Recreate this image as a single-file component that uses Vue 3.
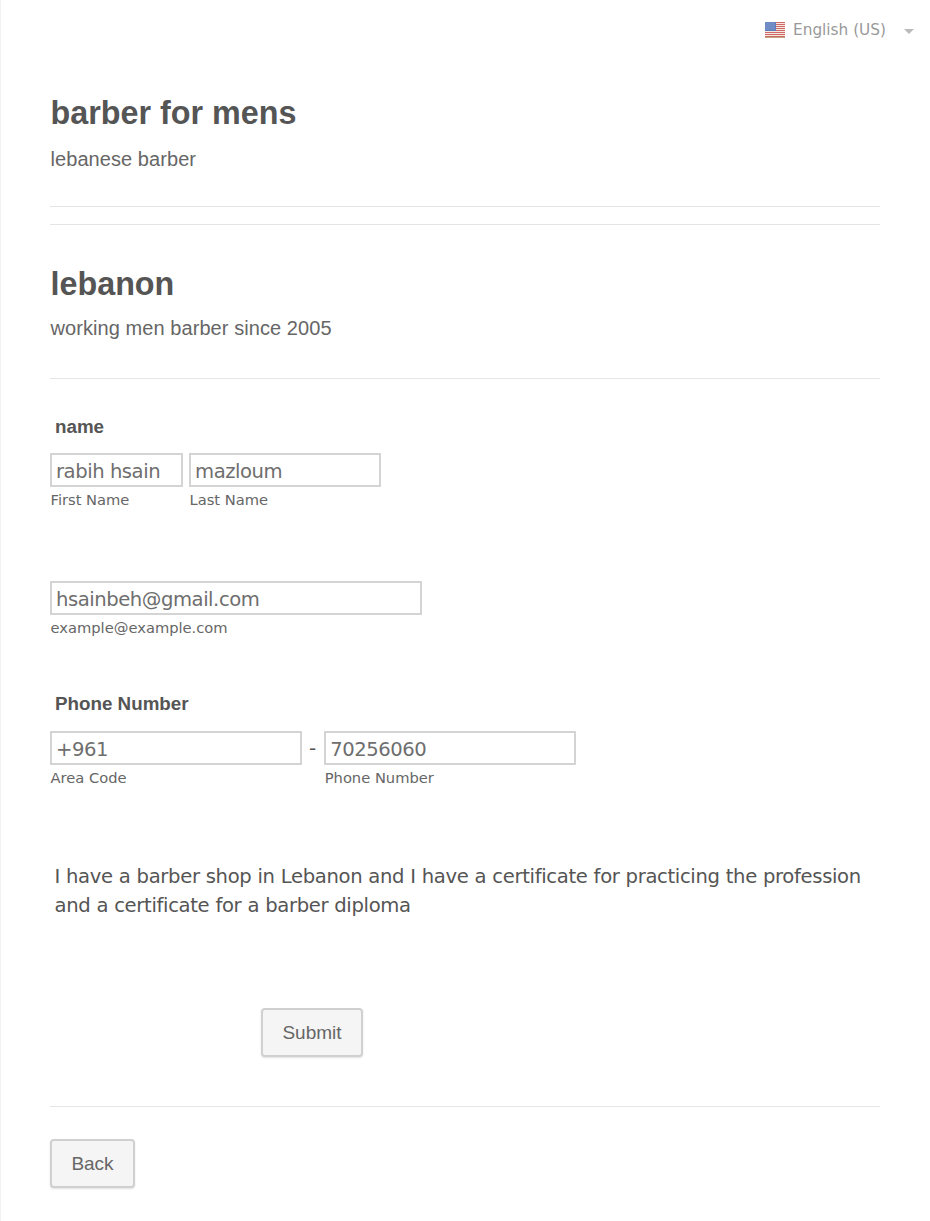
<script setup>
const stripes = [0, 1, 2, 3, 4, 5, 6, 7]
const stars = []
for (let r = 0; r < 4; r++) {
  for (let c = 0; c < 5; c++) {
    stars.push({ x: 0.5 + c * 2, y: 0.5 + r * 2 })
  }
}
</script>

<template>
  <div class="page">
    <div class="lang">
      <svg class="flag" width="20" height="16" viewBox="0 0 20 16">
        <rect width="20" height="16" fill="#f3e9dc" />
        <rect v-for="s in stripes" :key="s" x="0" :y="s * 2" width="20" height="1" fill="#d0686a" />
        <rect width="11" height="9" fill="#5f7dbd" />
        <rect v-for="(d, i) in stars" :key="i" :x="d.x" :y="d.y" width="1" height="1" fill="#a9b9dd" />
        <rect y="15" width="20" height="1" fill="#c4a67c" />
      </svg>
      <span class="lang-text">English (US)</span>
      <span class="caret"></span>
    </div>

    <main class="form">
      <header class="head first">
        <h1>barber for mens</h1>
        <p>lebanese barber</p>
      </header>
      <header class="head second">
        <h1>lebanon</h1>
        <p>working men barber since 2005</p>
      </header>

      <section class="field name">
        <div class="label">name</div>
        <div class="row">
          <label class="sub">
            <input class="inp w-first" value="rabih hsain" />
            <span>First Name</span>
          </label>
          <label class="sub">
            <input class="inp w-last" value="mazloum" />
            <span>Last Name</span>
          </label>
        </div>
      </section>

      <section class="field email">
        <label class="sub">
          <input class="inp w-email" value="hsainbeh@gmail.com" />
          <span>example@example.com</span>
        </label>
      </section>

      <section class="field phone">
        <div class="label label-phone">Phone Number</div>
        <div class="row">
          <label class="sub area">
            <input class="inp w-phone" value="+961" />
            <span>Area Code</span>
          </label>
          <span class="dash">-</span>
          <label class="sub">
            <input class="inp w-phone" value="70256060" />
            <span>Phone Number</span>
          </label>
        </div>
      </section>

      <p class="desc">I have a barber shop in Lebanon and I have a certificate for practicing the profession and a certificate for a barber diploma</p>

      <div class="submit-row">
        <button class="btn submit" type="button">Submit</button>
      </div>

      <div class="back-row">
        <button class="btn back" type="button">Back</button>
      </div>
    </main>
  </div>
</template>

<style>
html, body { margin: 0; background: #fff; }
</style>

<style scoped>
.page {
  box-sizing: border-box;
  width: 930px;
  height: 1221px;
  overflow: hidden;
  border-left: 1px solid #f2f2f2;
  font-family: "DejaVu Sans", sans-serif;
  color: #555;
}
.lang {
  display: flex;
  align-items: center;
  justify-content: flex-end;
  height: 20px;
  padding: 20px 15px 0 0;
}
.flag { margin-right: 8px; }
.lang-text { font-size: 15.3px; color: #999; }
.caret {
  width: 0;
  height: 0;
  margin: 2px 1px 0 18px;
  border-left: 5.5px solid transparent;
  border-right: 5.5px solid transparent;
  border-top: 5.5px solid #bbb;
}
.form { width: 830px; margin-left: 49px; }
.head { font-family: "Liberation Sans", Arial, sans-serif; border-bottom: 1px solid #e5e5e5; }
.head h1 { margin: 0; padding-left: 0.5px; font-size: 32.3px; line-height: 36px; font-weight: 700; color: #555; }
.head p { margin: 0; padding-left: 0.5px; font-size: 20px; line-height: 24px; letter-spacing: 0.07px; color: #666; }
.first { padding: 55px 0 35px; }
.first p { margin-top: 16px; }
.second { padding: 41px 0 38px; border-top: 1px solid #e5e5e5; margin-top: 17px; }
.second p { margin-top: 14px; }
.label {
  font-family: "Liberation Sans", Arial, sans-serif;
  font-size: 18.8px;
  line-height: 22px;
  font-weight: 700;
  color: #555;
  padding-left: 5px;
  margin-bottom: 15px;
}
.label-phone { margin-bottom: 16px; }
.name { padding-top: 37px; }
.email { padding-top: 73px; }
.phone { padding-top: 57px; }
.row { display: flex; align-items: flex-start; }
.sub { display: flex; flex-direction: column; margin-right: 6px; }
.sub span { padding-left: 0.5px; font-size: 14.7px; line-height: 17px; margin-top: 4px; color: #666; }
.inp {
  box-sizing: border-box;
  height: 34px;
  padding: 2px 4px 0;
  border: 2px solid #d4d4d4;
  border-radius: 0;
  outline: none;
  background: #fff;
  font-family: "DejaVu Sans", sans-serif;
  font-size: 19.6px;
  letter-spacing: -0.45px;
  color: #6e6e6e;
}
.w-first { width: 133px; }
.w-last { width: 192px; }
.w-email { width: 372px; }
.w-phone { width: 252px; }
.area { margin-right: 7px; }
.dash { font-size: 20px; line-height: 34px; margin-right: 8px; color: #555; }
.row .sub:last-child { margin-right: 0; }
.desc {
  margin: 76px 0 0;
  padding-left: 4.5px;
  font-size: 19.6px;
  letter-spacing: -0.34px;
  word-spacing: 0.2px;
  line-height: 29px;
  color: #555;
}
.submit-row { padding: 88px 0 49px 211px; border-bottom: 1px solid #e5e5e5; }
.back-row { padding-top: 32px; }
.btn {
  height: 49px;
  box-sizing: border-box;
  border: 2px solid #d0d0d0;
  border-radius: 4px;
  background: #f5f5f5;
  box-shadow: 0 1px 2px rgba(0, 0, 0, 0.12);
  font-family: "Liberation Sans", Arial, sans-serif;
  font-size: 19px;
  color: #666;
  padding: 0;
}
.submit { width: 102px; }
.back { width: 85px; }
</style>
